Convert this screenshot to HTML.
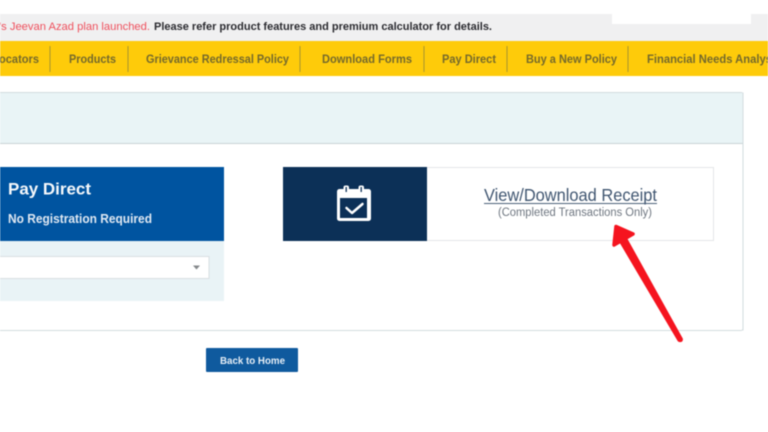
<!DOCTYPE html>
<html lang="en">
<head>
<meta charset="utf-8">
<title>Pay Direct</title>
<style>
html,body{margin:0;padding:0;width:768px;height:432px;overflow:hidden;background:#fff}
svg{display:block;filter:blur(.45px)}
text{font-family:"Liberation Sans",Arial,sans-serif}
.n{font-size:12px;font-weight:700;fill:#74692c}
</style>
</head>
<body>
<svg width="768" height="432" viewBox="0 0 768 432" xmlns="http://www.w3.org/2000/svg">
<rect width="768" height="432" fill="#fff"/>
<!-- notice bar -->
<rect y="14" width="768" height="27" fill="#f0f0f1"/>
<rect x="612" y="14" width="139" height="10" fill="#fff"/>
<text x="-1" y="30" font-size="11" fill="#ee4f5c" textLength="151" lengthAdjust="spacingAndGlyphs">'s Jeevan Azad plan launched.</text>
<text x="154" y="30" font-size="11" font-weight="700" fill="#2b2b30" textLength="338" lengthAdjust="spacingAndGlyphs">Please refer product features and premium calculator for details.</text>
<!-- nav -->
<rect y="41" width="768" height="35" fill="#fecb0a"/>
<g fill="#a8962f">
<rect x="49.500" y="46" width="1" height="26"/>
<rect x="127.500" y="46" width="1" height="26"/>
<rect x="299.500" y="46" width="1" height="26"/>
<rect x="423.500" y="46" width="1" height="26"/>
<rect x="506.500" y="46" width="1" height="26"/>
<rect x="627.500" y="46" width="1" height="26"/>
</g>
<g>
<text class="n" x="-1" y="63" textLength="40" lengthAdjust="spacingAndGlyphs">ocators</text>
<text class="n" x="69" y="63" textLength="47" lengthAdjust="spacingAndGlyphs">Products</text>
<text class="n" x="146" y="63" textLength="143" lengthAdjust="spacingAndGlyphs">Grievance Redressal Policy</text>
<text class="n" x="322" y="63" textLength="90" lengthAdjust="spacingAndGlyphs">Download Forms</text>
<text class="n" x="442" y="63" textLength="54" lengthAdjust="spacingAndGlyphs">Pay Direct</text>
<text class="n" x="526" y="63" textLength="91" lengthAdjust="spacingAndGlyphs">Buy a New Policy</text>
<text class="n" x="647" y="63" textLength="125" lengthAdjust="spacingAndGlyphs">Financial Needs Analys</text>
</g>
<!-- main panel -->
<rect x="-5" y="92.500" width="748" height="238" fill="#fff" stroke="#d3dcdf" rx="2"/>
<rect x="-5" y="93" width="747.500" height="50" fill="#e9f4f6"/>
<rect x="-5" y="143" width="748" height="1" fill="#c9d3d6"/>
<rect x="742.500" y="92.500" width="1" height="238" fill="#d3dcdf"/>
<!-- pay direct -->
<rect x="-5" y="241" width="229" height="60" fill="#e9f3f6"/>
<rect x="-5" y="167" width="229" height="74" fill="#0054a0"/>
<text x="8" y="194.500" font-size="17" font-weight="700" fill="#f5f8fb" textLength="83" lengthAdjust="spacingAndGlyphs">Pay Direct</text>
<text x="8" y="223" font-size="12.500" font-weight="700" fill="#dfe8f2" textLength="144" lengthAdjust="spacingAndGlyphs">No Registration Required</text>
<rect x="-5" y="256.500" width="214" height="22" fill="#fff" stroke="#d9dfe2"/>
<path d="M193 265.500h7l-3.500 4z" fill="#85888b"/>
<!-- receipt -->
<rect x="283.500" y="167.500" width="430" height="73" fill="#fff" stroke="#e4e6e8"/>
<rect x="283" y="167" width="144" height="74" fill="#0c3057"/>
<!-- calendar icon -->
<rect x="337" y="189" width="34" height="32" rx="2.500" fill="#fff"/>
<rect x="340" y="198" width="27" height="20" fill="#0c3057"/>
<rect x="343.500" y="185.500" width="5.500" height="8" rx="2" fill="#fff"/>
<rect x="358.500" y="185.500" width="5.500" height="8" rx="2" fill="#fff"/>
<path d="M346.200 187v5M361.200 187v5" stroke="#0c3057" stroke-width="1.300" fill="none"/>
<path d="M346.500 208l5.500 5 10.500-9" stroke="#fff" stroke-width="2.500" fill="none" stroke-linecap="round" stroke-linejoin="round"/>
<text x="484" y="201" font-size="17.500" fill="#3f5570" textLength="173" lengthAdjust="spacingAndGlyphs">View/Download Receipt</text>
<rect x="484" y="203" width="173" height="1" fill="#4a5f78"/>
<text x="498" y="216" font-size="11.500" fill="#6e7680" textLength="154" lengthAdjust="spacingAndGlyphs">(Completed Transactions Only)</text>
<!-- arrow -->
<path d="M627 238L619.500 242.500L677.800 341.200Q680 343 682.200 341.500Q683.500 339.500 682.500 338Z" fill="#f5141f"/>
<path d="M616 226.500L633 234L614 245Z" fill="#f5141f" stroke="#f5141f" stroke-width="3.500" stroke-linejoin="round"/>
<!-- button -->
<rect x="206" y="348" width="92" height="24" rx="1" fill="#0f5a9e"/>
<text x="220" y="364" font-size="10.500" font-weight="700" fill="#e6eef6" textLength="65" lengthAdjust="spacingAndGlyphs">Back to Home</text>
</svg>
</body>
</html>
